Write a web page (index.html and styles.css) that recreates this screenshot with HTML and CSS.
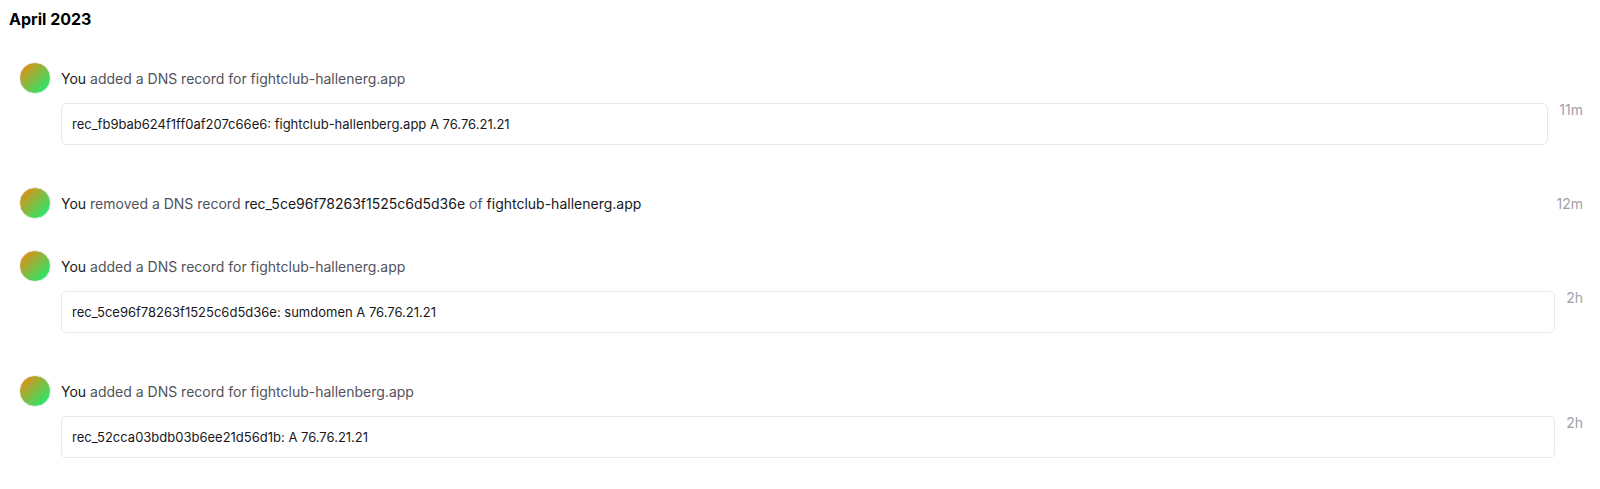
FILE: index.html
```html
<!DOCTYPE html>
<html lang="en">
<head>
<meta charset="utf-8">
<title>Activity</title>
<link rel="stylesheet" href="styles.css">
</head>
<body>
<main class="page">
  <h2 class="month">April 2023</h2>
  <ul class="feed">
    <li class="entry">
      <div class="head"><span class="avatar"></span><p class="line"><b>You</b> added a DNS record for fightclub-hallenerg.app</p></div>
      <div class="body"><div class="card">rec_fb9bab624f1ff0af207c66e6: fightclub-hallenberg.app A 76.76.21.21</div><time class="age">11m</time></div>
    </li>
    <li class="entry">
      <div class="head"><span class="avatar"></span><p class="line"><b>You</b> removed a DNS record <b>rec_5ce96f78263f1525c6d5d36e</b> of <b>fightclub-hallenerg.app</b></p><time class="age age-inline">12m</time></div>
    </li>
    <li class="entry">
      <div class="head"><span class="avatar"></span><p class="line"><b>You</b> added a DNS record for fightclub-hallenerg.app</p></div>
      <div class="body"><div class="card">rec_5ce96f78263f1525c6d5d36e: sumdomen A 76.76.21.21</div><time class="age">2h</time></div>
    </li>
    <li class="entry">
      <div class="head"><span class="avatar"></span><p class="line"><b>You</b> added a DNS record for fightclub-hallenberg.app</p></div>
      <div class="body"><div class="card">rec_52cca03bdb03b6ee21d56d1b: A 76.76.21.21</div><time class="age">2h</time></div>
    </li>
  </ul>
</main>
</body>
</html>
```
FILE: styles.css
```css
* { box-sizing: border-box; }
html, body { margin: 0; background: #fff; }
body { font-family: Inter, "Liberation Sans", sans-serif; color: #111; }
.page { padding: 9px 17px 0 9px; }
.month { margin: 0; font-size: 16px; line-height: 20px; font-weight: 700; color: #000; }
.feed { list-style: none; margin: 33px 0 0; padding: 0 0 0 10px; }
.entry { margin-bottom: 31px; }
.head { display: flex; align-items: center; height: 32px; gap: 10px; }
.avatar { flex: none; width: 32px; height: 32px; border-radius: 50%; border: 1px solid #eee; background: linear-gradient(135deg, #d4941a 15%, #2fe56a 85%); }
.line { flex: 1; margin: 0; padding-top: 1px; font-size: 14px; line-height: 20px; color: #52525b; }
.line b { font-weight: 400; color: #18181b; }
.body { display: flex; align-items: flex-start; gap: 11px; padding-left: 42px; margin-top: 9px; margin-bottom: 42px; }
.card { flex: 1; height: 42px; display: flex; align-items: center; padding: 0 10px; border: 1px solid #e8e8e8; border-radius: 5px; font-size: 13px; color: #18181b; }
.age { flex: none; font-size: 14px; line-height: 13px; color: #a1a1aa; }
.age-inline { padding-top: 1px; }
```
